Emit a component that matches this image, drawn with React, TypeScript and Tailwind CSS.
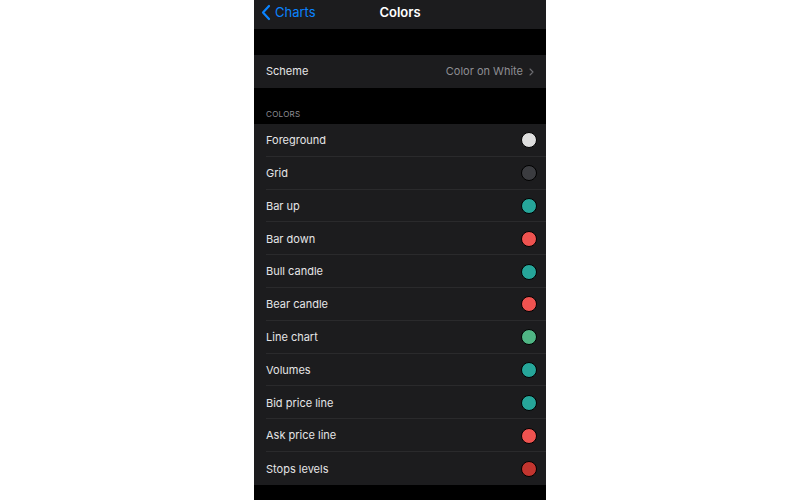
import React from 'react';

const rows = [
  { label: 'Foreground', color: '#dedede' },
  { label: 'Grid', color: '#3b3c40' },
  { label: 'Bar up', color: '#26a69a' },
  { label: 'Bar down', color: '#ef5350' },
  { label: 'Bull candle', color: '#26a69a' },
  { label: 'Bear candle', color: '#ef5350' },
  { label: 'Line chart', color: '#4fb584' },
  { label: 'Volumes', color: '#26a69a' },
  { label: 'Bid price line', color: '#26a69a' },
  { label: 'Ask price line', color: '#ef5350' },
  { label: 'Stops levels', color: '#c2352f' },
];

export default function App() {
  return (
    <div className="w-[800px] h-[500px] bg-white flex justify-center" style={{ fontFamily: 'Inter, "Liberation Sans", sans-serif' }}>
      <div className="w-[292px] h-[500px] bg-black flex flex-col overflow-hidden">
        {/* nav bar */}
        <div className="relative h-[29px] bg-[#1c1c1e] flex items-center pb-[4px] shrink-0">
          <div className="flex items-center pl-[6px] text-[#0a84ff] text-[13px]">
            <svg width="12" height="17" viewBox="0 0 12 17" fill="none">
              <path d="M9 2 L3 8.5 L9 15" stroke="#0a84ff" strokeWidth="2.2" strokeLinecap="round" strokeLinejoin="round" />
            </svg>
            <span className="ml-[3px]">Charts</span>
          </div>
          <div className="absolute inset-0 pb-[4px] flex items-center justify-center text-white text-[13px] font-semibold pointer-events-none">
            Colors
          </div>
        </div>

        <div className="h-[26px] shrink-0" />

        {/* scheme */}
        <div className="h-[33px] bg-[#1c1c1e] flex items-center justify-between pl-[12px] pr-[12px] shrink-0">
          <span className="text-[#e5e5e7] text-[11px]">Scheme</span>
          <div className="flex items-center gap-[6px] text-[#8e8e93] text-[11px]">
            <span>Color on White</span>
            <svg width="5" height="8" viewBox="0 0 5 8" fill="none">
              <path d="M1 1 L4 4 L1 7" stroke="#6e6e73" strokeWidth="1.1" strokeLinecap="round" strokeLinejoin="round" />
            </svg>
          </div>
        </div>

        <div className="h-[36px] shrink-0 flex items-end pl-[12px] pb-[4px]">
          <span className="text-[#8e8e93] text-[8px] tracking-[0.3px]">COLORS</span>
        </div>

        {/* colour rows */}
        <div className="bg-[#1c1c1e] flex flex-col shrink-0">
          {rows.map((r, i) => (
            <div key={r.label} className="pl-[12px]">
              <div className={`h-[32.8px] flex items-center justify-between pr-[9px] pt-[1px] ${i < rows.length - 1 ? 'border-b border-[#2a2a2c]' : ''}`}>
                <span className="text-[#e5e5e7] text-[11px]">{r.label}</span>
                <span className="w-[16px] h-[16px] rounded-full border border-black" style={{ backgroundColor: r.color }} />
              </div>
            </div>
          ))}
        </div>
      </div>
    </div>
  );
}
